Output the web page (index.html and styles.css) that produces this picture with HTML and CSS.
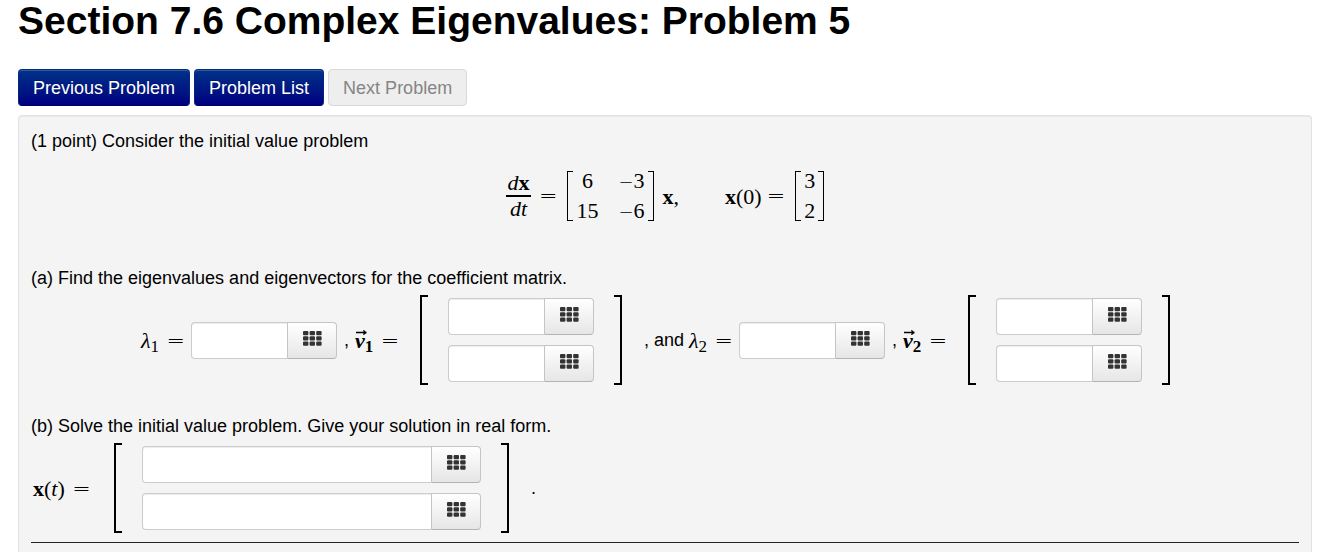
FILE: index.html
```
<!DOCTYPE html>
<html lang="en">
<head>
    <meta charset="UTF-8">
    <meta name="viewport" content="width=device-width, initial-scale=1.0">
    <title>Section 7.6 Complex Eigenvalues: Problem 5</title>
    <link rel="stylesheet" href="styles.css">
</head>
<body>
    <!-- keypad icon shared by all answer boxes -->
    <svg class="icon-defs" width="0" height="0">
        <symbol id="keypad" viewBox="0 0 19 15">
            <rect x="0" y="0" width="5.4" height="4.2" rx="1"/>
            <rect x="6.6" y="0" width="5.4" height="4.2" rx="1"/>
            <rect x="13.2" y="0" width="5.4" height="4.2" rx="1"/>
            <rect x="0" y="5.3" width="5.4" height="4.2" rx="1"/>
            <rect x="6.6" y="5.3" width="5.4" height="4.2" rx="1"/>
            <rect x="13.2" y="5.3" width="5.4" height="4.2" rx="1"/>
            <rect x="0" y="10.6" width="5.4" height="4.2" rx="1"/>
            <rect x="6.6" y="10.6" width="5.4" height="4.2" rx="1"/>
            <rect x="13.2" y="10.6" width="5.4" height="4.2" rx="1"/>
        </symbol>
        <symbol id="arrow" viewBox="0 0 11 5">
            <path d="M0 2.5H10M7.5 0.3Q8.2 2 10.4 2.5Q8.2 3 7.5 4.7" fill="none" stroke="#000" stroke-width="1.3"/>
        </symbol>
    </svg>

    <h1>Section 7.6 Complex Eigenvalues: Problem 5</h1>

    <div class="nav-buttons">
        <button class="btn btn-primary">Previous Problem</button>
        <button class="btn btn-primary">Problem List</button>
        <button class="btn" disabled>Next Problem</button>
    </div>

    <div class="problem">
        <p>(1 point) Consider the initial value problem</p>

        <div class="equation math">
            <div class="fraction">
                <span><i>d</i><b>x</b></span>
                <span class="denominator"><i>dt</i></span>
            </div>
            <span class="op equals">=</span>
            <div class="bracket">
                <div class="matrix two-cols">
                    <span>6</span><span><span class="op">−</span>3</span>
                    <span>15</span><span><span class="op">−</span>6</span>
                </div>
            </div>
            <span class="vector"><b>x</b>,</span>
            <span><b>x</b>(0)</span>
            <span class="op equals">=</span>
            <div class="bracket">
                <div class="matrix">
                    <span>3</span>
                    <span>2</span>
                </div>
            </div>
        </div>

        <p>(a) Find the eigenvalues and eigenvectors for the coefficient matrix.</p>

        <div class="answer-row eigen-row">
            <label class="math lambda" for="lambda1"><i>λ</i><sub>1</sub> <span class="op">=</span></label>
            <div class="answer">
                <input type="text" id="lambda1">
                <button aria-label="Equation editor"><svg><use href="#keypad"/></svg></button>
            </div>
            <span class="comma">,</span>
            <label class="math eigenvector" for="v1a"><b><i class="vec">v<svg><use href="#arrow"/></svg></i><sub>1</sub></b> <span class="op">=</span></label>
            <div class="bracket tall">
                <div class="answer">
                    <input type="text" id="v1a">
                    <button aria-label="Equation editor"><svg><use href="#keypad"/></svg></button>
                </div>
                <div class="answer">
                    <input type="text" id="v1b" aria-label="v1 second entry">
                    <button aria-label="Equation editor"><svg><use href="#keypad"/></svg></button>
                </div>
            </div>
            <span class="and">, and</span>
            <label class="math lambda" for="lambda2"><i>λ</i><sub>2</sub> <span class="op">=</span></label>
            <div class="answer">
                <input type="text" id="lambda2">
                <button aria-label="Equation editor"><svg><use href="#keypad"/></svg></button>
            </div>
            <span class="comma">,</span>
            <label class="math eigenvector" for="v2a"><b><i class="vec">v<svg><use href="#arrow"/></svg></i><sub>2</sub></b> <span class="op">=</span></label>
            <div class="bracket tall">
                <div class="answer">
                    <input type="text" id="v2a">
                    <button aria-label="Equation editor"><svg><use href="#keypad"/></svg></button>
                </div>
                <div class="answer">
                    <input type="text" id="v2b" aria-label="v2 second entry">
                    <button aria-label="Equation editor"><svg><use href="#keypad"/></svg></button>
                </div>
            </div>
        </div>

        <p>(b) Solve the initial value problem. Give your solution in real form.</p>

        <div class="answer-row">
            <label class="math solution" for="xa"><b>x</b>(<i>t</i>) <span class="op">=</span></label>
            <div class="bracket tall">
                <div class="answer wide">
                    <input type="text" id="xa">
                    <button aria-label="Equation editor"><svg><use href="#keypad"/></svg></button>
                </div>
                <div class="answer wide">
                    <input type="text" id="xb" aria-label="x(t) second entry">
                    <button aria-label="Equation editor"><svg><use href="#keypad"/></svg></button>
                </div>
            </div>
            <span class="period">.</span>
        </div>

        <hr>
    </div>
</body>
</html>
```

FILE: styles.css
```
* {
    box-sizing: border-box;
}

body {
    display: flex;
    flex-direction: column;
    min-height: 100vh;
    margin: 0;
    padding: 0 10px 0 18px;
    background-color: #fff;
    color: #000;
    font-family: "Liberation Sans", Arial, sans-serif;
    font-size: 18px;
    line-height: 25px;
}

.icon-defs {
    position: absolute;
}

h1 {
    margin: 0 0 27px;
    font-size: 39px;
    line-height: 42px;
}

/* navigation */
.nav-buttons {
    display: flex;
    gap: 4px;
    margin-bottom: 9px;
}

.btn {
    height: 37px;
    padding: 1px 14px 0;
    border: 1px solid #d9d9d9;
    border-radius: 4px;
    background-color: #eee;
    color: #858585;
    font: inherit;
}

.btn-primary {
    border-color: #002a80 #002a80 #000066;
    background: linear-gradient(#003388, #000080);
    color: #fff;
    text-shadow: 0 -1px 0 rgba(0, 0, 0, 0.25);
    box-shadow: inset 0 1px 0 rgba(255, 255, 255, 0.2);
}

/* problem body */
.problem {
    flex: 1;
    padding: 13px 12px 0;
    border: 1px solid #e3e3e3;
    border-bottom: 0;
    border-radius: 4px 4px 0 0;
    background-color: #f4f4f4;
    box-shadow: inset 0 1px 1px rgba(0, 0, 0, 0.05);
}

.problem p {
    margin: 0;
}

.math {
    font-family: "Liberation Serif", "Times New Roman", serif;
    font-size: 22px;
    white-space: nowrap;
}

.math sub {
    font-size: 17px;
    line-height: 0;
    vertical-align: -4px;
}

.op {
    font-family: "DejaVu Sans Light", "DejaVu Sans", sans-serif;
    font-size: 22px;
    font-weight: 200;
    line-height: 0;
}

.matrix .op {
    font-size: 18px;
}

.equation {
    display: flex;
    justify-content: center;
    align-items: center;
    margin: 17px 0 45px;
}

.fraction {
    display: flex;
    flex-direction: column;
    margin-right: 3px;
    line-height: 24px;
    text-align: center;
}

.denominator {
    padding: 0 4px;
    border-top: 2px solid #000;
}

.equals {
    margin: 0 10px 0 5px;
}

.vector {
    margin: 0 46px 0 9px;
}

/* square brackets drawn at both sides of their content */
.bracket {
    position: relative;
    padding: 0 9px;
}

.bracket::before,
.bracket::after {
    content: "";
    position: absolute;
    top: 0;
    bottom: 0;
    width: 5px;
    border: 1px solid #000;
}

.bracket::before {
    left: 0;
    border-right: 0;
}

.bracket::after {
    right: 0;
    border-left: 0;
}

.matrix {
    display: grid;
    gap: 10px 20px;
    justify-items: center;
    line-height: 20px;
}

.two-cols {
    grid-template-columns: auto auto;
}

.tall {
    display: flex;
    flex-direction: column;
    gap: 10px;
    padding: 3px 28px;
}

.tall::before,
.tall::after {
    width: 6px;
    border-width: 2px;
}

/* answer boxes */
.answer-row {
    display: flex;
    align-items: center;
    margin: 4px 0 29px;
}

.answer-row .op {
    margin-left: 2px;
}

.eigen-row {
    padding-left: 110px;
}

.lambda {
    width: 50px;
}

.comma {
    width: 18px;
    padding-left: 7px;
}

.eigenvector {
    width: 65px;
}

.and {
    width: 67px;
    padding-left: 22px;
    white-space: nowrap;
}

.solution {
    width: 83px;
    padding-left: 2px;
}

.period {
    padding-left: 22px;
}

.vec {
    position: relative;
}

.vec svg {
    position: absolute;
    top: 2px;
    left: 1px;
    width: 11px;
    height: 5px;
}

.answer {
    display: flex;
    width: 146px;
    height: 37px;
}

.wide {
    width: 339px;
}

.answer input {
    flex: 1;
    min-width: 0;
    padding: 4px 6px;
    border: 1px solid #ccc;
    border-right: 0;
    border-radius: 4px 0 0 4px;
    background-color: #fff;
    font: inherit;
    box-shadow: inset 0 1px 1px rgba(0, 0, 0, 0.075);
}

.answer button {
    display: flex;
    justify-content: center;
    align-items: center;
    width: 50px;
    padding: 0 0 4px;
    border: 1px solid #c5c5c5;
    border-bottom-color: #b3b3b3;
    border-radius: 0 4px 4px 0;
    background: linear-gradient(#fff, #e6e6e6);
}

.answer button svg {
    width: 19px;
    height: 15px;
    fill: #333;
}

hr {
    margin: -20px 0 0;
    border: 0;
    border-top: 1px solid #222;
}
```
